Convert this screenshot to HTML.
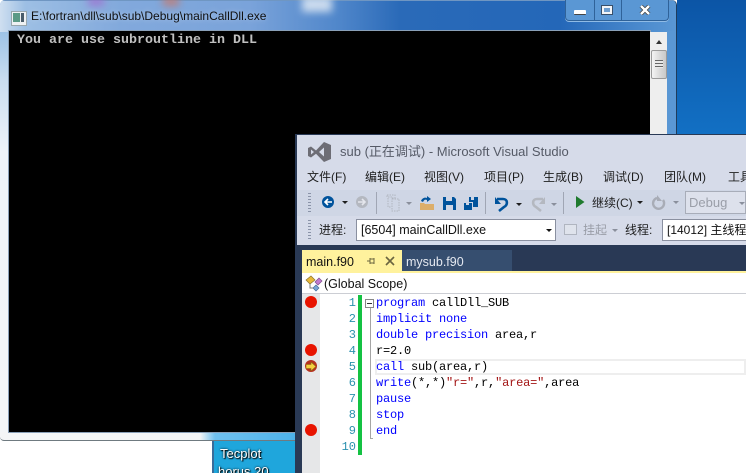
<!DOCTYPE html>
<html><head><meta charset="utf-8">
<style>
html,body{margin:0;padding:0;width:746px;height:473px;overflow:hidden;background:#fff}
body{position:relative;font-family:"Liberation Sans","Noto Sans CJK SC",sans-serif}
div,span,svg{position:absolute;display:block}
.t{white-space:nowrap}
.m{font-size:12px;color:#1e1e1e;top:169px;line-height:16px}
.l{font-size:12px;color:#1e1e1e;line-height:16px;white-space:nowrap}
.c{left:376px;font-family:"Liberation Mono",monospace;font-size:12px;letter-spacing:-.2px;line-height:16px;white-space:pre;color:#000}
.k{position:static;display:inline;color:#0000ff}
.s{position:static;display:inline;color:#a31515}
.n{width:36px;left:320px;text-align:right;font-family:"Liberation Mono",monospace;font-size:12px;line-height:16px;color:#2b91af}
.bp{left:305px;width:12px;height:12px;border-radius:50%;background:#e81400}
</style></head><body>

<!-- desktop -->
<div style="left:212px;top:432px;width:84px;height:41px;background:#1fa6dc"></div>
<div style="left:212px;top:441px;width:2px;height:32px;background:#3a6d9a"></div>
<div style="left:677px;top:0;width:69px;height:135px;background:linear-gradient(180deg,#0c55a6,#1270c4)"></div>
<div class="t" style="left:220px;top:446px;font-size:13px;color:#fff;text-shadow:0 0 2px #000,1px 1px 1px #000">Tecplot</div>
<div class="t" style="left:218px;top:464px;font-size:13px;color:#fff;text-shadow:0 0 2px #000,1px 1px 1px #000">horus 20</div>

<!-- console window -->
<div style="left:0;top:0;width:676px;height:441px;border-radius:5px 5px 0 5px;background:#5a97d4;border-right:1px solid #1f3c5c"></div>
<div style="left:0;top:0;width:676px;height:32px;border-radius:5px 5px 0 0;overflow:hidden;background:linear-gradient(90deg,#cfdff0 0,#9dbfe4 25px,#82a9dc 120px,#7aa3da 250px,#4f86ca 340px,#2a6ab8 400px,#2467b8 560px,#4f8ed0 650px,#5a97d4 676px)">
  <div style="left:0;top:0;width:676px;height:1px;background:#6f96c2"></div>
  <div style="left:88px;top:-3px;width:16px;height:9px;background:#a06fd0;filter:blur(4px);opacity:.8"></div>
  <div style="left:163px;top:-3px;width:16px;height:9px;background:#c8786a;filter:blur(4px);opacity:.8"></div>
  <div style="left:302px;top:-3px;width:30px;height:15px;background:#dfe9f4;filter:blur(4px);opacity:.85"></div>
</div>
<div style="left:0;top:32px;width:9px;height:400px;background:linear-gradient(180deg,#9dc2e6 0,#c9ddf0 12%,#eef3f9 30%,#f4f6f8 100%)"></div>
<div style="left:0;top:432px;width:296px;height:9px;box-sizing:border-box;background:linear-gradient(90deg,#f5f6f7 0,#f3f5f6 200px,#6fc0ee 215px,#4db2ea 296px);border-bottom:1px solid #6f7a80;border-radius:0 0 0 4px"></div>
<div style="left:9px;top:31px;width:641px;height:401px;background:#000;box-shadow:0 0 0 1px #8aa0b8"></div>
<div style="left:667px;top:31px;width:9px;height:104px;background:#5a97d4"></div>

<!-- console icon -->
<div style="left:11px;top:11px;width:14px;height:13px;background:#eef1f3;border:1px solid #99a7ad"></div>
<div style="left:13px;top:13px;width:7px;height:9px;background:#5b9a86"></div>
<div style="left:21px;top:13px;width:3px;height:9px;background:#495c6a"></div>
<div class="t" style="left:31px;top:8px;font-size:12px;line-height:16px;color:#101010;text-shadow:0 0 6px rgba(255,255,255,.45)">E:\fortran\dll\sub\sub\Debug\mainCallDll.exe</div>
<div class="t" style="left:17px;top:33px;font-family:'Liberation Mono',monospace;font-weight:bold;font-size:13.33px;line-height:16px;color:#c0c0c0">You are use subroutline in DLL</div>

<!-- scrollbar -->
<div style="left:650px;top:32px;width:17px;height:103px;background:#eeeeee"></div>
<div style="left:656px;top:40px;width:0;height:0;border-left:3.5px solid transparent;border-right:3.5px solid transparent;border-bottom:4px solid #333"></div>
<div style="left:651px;top:50px;width:14px;height:27px;border:1px solid #9a9a9a;border-radius:2px;background:linear-gradient(90deg,#f4f4f4,#dcdcdc 50%,#c9c9c9)"></div>
<div style="left:655px;top:60px;width:8px;height:8px;background:repeating-linear-gradient(180deg,#666 0,#666 1px,#e8e8e8 1px,#e8e8e8 3px)"></div>

<!-- caption buttons -->
<div style="left:565px;top:0;width:102px;height:20px;border:1px solid #2f6299;border-top:0;border-radius:0 0 4px 4px;box-shadow:0 1px 0 #8fbbe6;background:#5a97d4"></div>
<div style="left:594px;top:0;width:1px;height:20px;background:#2f6299"></div>
<div style="left:621px;top:0;width:1px;height:20px;background:#2f6299"></div>
<div style="left:574px;top:10px;width:12px;height:5px;background:#fff;border-bottom:1px solid #444;box-sizing:border-box;border-radius:1px"></div>
<div style="left:602px;top:6px;width:10px;height:8px;border:2px solid #f2f5f8;box-shadow:0 0 0 1px #39506a;background:#6f9fd0;box-sizing:border-box"></div>
<svg style="left:639px;top:5px" width="12" height="10" viewBox="0 0 12 10"><path d="M2 1l8 8M10 1L2 9" stroke="#444" stroke-width="4" fill="none"/><path d="M2 1l8 8M10 1L2 9" stroke="#fff" stroke-width="2.400" fill="none"/></svg>

<!-- VS window -->
<div style="left:295px;top:134px;width:451px;height:339px;background:#293955"></div>
<div style="left:297px;top:135px;width:449px;height:110px;background:#d6dbe9"></div>
<svg style="left:307px;top:141px" width="26" height="22" viewBox="0 0 26 22"><path d="M1 7 L4 5.5 L9 9.5 L17 1 L24 4 V18 L17 21 L9 12.8 L4 16.5 L1 15 Z M4 8.5 V13.5 L7 11 Z M17 6.500 L12 11 L17 15.500 Z" fill="#6d6d75" fill-rule="evenodd"/></svg>
<div class="t" style="left:340px;top:144px;font-size:13px;line-height:16px;color:#555a66">sub (正在调试) - Microsoft Visual Studio</div>

<!-- menu -->
<div class="t m" style="left:307px">文件(F)</div>
<div class="t m" style="left:365px">编辑(E)</div>
<div class="t m" style="left:424px">视图(V)</div>
<div class="t m" style="left:484px">项目(P)</div>
<div class="t m" style="left:543px">生成(B)</div>
<div class="t m" style="left:603px">调试(D)</div>
<div class="t m" style="left:664px">团队(M)</div>
<div class="t m" style="left:728px">工具</div>

<!-- toolbar 1 -->
<div style="left:297px;top:190px;width:449px;height:26px;background:#cfd6e5"></div>
<div style="left:308px;top:193px;width:3px;height:20px;background:repeating-linear-gradient(180deg,#8a93a8 0,#8a93a8 1px,transparent 1px,transparent 3px)"></div>
<svg style="left:318px;top:192px" width="428" height="24" viewBox="318 192 428 24">
<circle cx="328" cy="202" r="6" fill="#00539c"/><path d="M332 202H326M328 199L325 202L328 205" stroke="#fff" stroke-width="1.600" fill="none"/>
<path d="M342 201h6l-3 3z" fill="#1e1e1e"/>
<circle cx="362" cy="202" r="6" fill="#b4b8c0"/><path d="M358 202H364M362 199L365 202L362 205" stroke="#e4e6ec" stroke-width="1.600" fill="none"/>
<rect x="376" y="192" width="1" height="22" fill="#a0a6b4"/>
<path d="M387 195h8v3h-3v-1h-5zM392 199h7v12h-7zM388 198v9h3" fill="none" stroke="#b0b5c0" stroke-width="1" stroke-dasharray="1.500 1"/>
<path d="M406 202h6l-3 3z" fill="#8a8f9c"/>
<path d="M420 203h4l1 1h9v6h-14z" fill="#dcae6a"/>
<path d="M421 201c1-3 4-4 6-3v-2l4 3-4 3v-2c-2-1-3 0-4 2z" fill="#00539c"/>
<path d="M443 197h11l2 2v11h-13zM446 197v4h6v-4M446 205h7v5h-7z" fill="#00539c" fill-rule="evenodd"/>
<path d="M464 203h8v7h-8zM469 197h9v10h-5v-5h-4z" fill="#00539c"/><path d="M471 197h3v3h-3z" fill="#cfd6e5"/><path d="M466 203h3v2h-3z" fill="#cfd6e5"/>
<rect x="485" y="192" width="1" height="22" fill="#a0a6b4"/>
<path d="M497 199h6c5 0 5 6 1 8l-5 4" fill="none" stroke="#00539c" stroke-width="2.600"/><path d="M495 197v7h6z" fill="#00539c"/>
<path d="M516 203h6l-3 3z" fill="#1e1e1e"/>
<path d="M543 199h-6c-5 0-5 6-1 8l5 4" fill="none" stroke="#b4b8c0" stroke-width="2.600"/><path d="M545 197v7h-6z" fill="#b4b8c0"/>
<path d="M551 203h6l-3 3z" fill="#8a8f9c"/>
<rect x="563" y="192" width="1" height="22" fill="#a0a6b4"/>
<path d="M576 196l8.500 6-8.500 6z" fill="#1f7a2e"/>
<path d="M637 201h6l-3 3z" fill="#1e1e1e"/>
<path d="M657 198a5.500 5.500 0 1 0 6 2" fill="none" stroke="#a8acb6" stroke-width="2.400"/><path d="M657 195v6h5z" fill="#a8acb6"/>
<path d="M673 201h6l-3 3z" fill="#8a8f9c"/>
</svg>
<div class="t l" style="left:592px;top:195px">继续(C)</div>
<div style="left:685px;top:191px;width:61px;height:23px;box-sizing:border-box;border:1px solid #a8adb9;background:#dde1ec"></div>
<div class="t" style="left:689px;top:195px;font-size:13px;line-height:16px;color:#9a9ea8">Debug</div>
<div style="left:739px;top:202px;width:0;height:0;border-left:3px solid transparent;border-right:3px solid transparent;border-top:3px solid #8a8f9c"></div>

<!-- toolbar 2 -->
<div style="left:308px;top:220px;width:3px;height:20px;background:repeating-linear-gradient(180deg,#8a93a8 0,#8a93a8 1px,transparent 1px,transparent 3px)"></div>
<div class="t l" style="left:319px;top:222px">进程:</div>
<div style="left:356px;top:219px;width:200px;height:22px;box-sizing:border-box;border:1px solid #8a90a0;background:#fff"></div>
<div class="t" style="left:361px;top:222px;font-size:12.500px;line-height:16px;color:#111">[6504] mainCallDll.exe</div>
<div style="left:546px;top:229px;width:0;height:0;border-left:3px solid transparent;border-right:3px solid transparent;border-top:3px solid #111"></div>
<div style="left:564px;top:224px;width:13px;height:11px;box-sizing:border-box;border:1px solid #b0b5c0;background:#dfe3ec"></div>
<div class="t l" style="left:583px;top:222px;color:#9a9ea8">挂起</div>
<div style="left:612px;top:229px;width:0;height:0;border-left:3px solid transparent;border-right:3px solid transparent;border-top:3px solid #8a8f9c"></div>
<div class="t l" style="left:625px;top:222px">线程:</div>
<div style="left:662px;top:219px;width:84px;height:22px;box-sizing:border-box;border:1px solid #8a90a0;border-right:0;background:#fff"></div>
<div class="t" style="left:667px;top:222px;font-size:12px;line-height:16px;color:#111">[14012] 主线程</div>

<!-- tabs -->
<div style="left:302px;top:250px;width:100px;height:23px;background:#fff29d"></div>
<div class="t" style="left:306px;top:254px;font-size:12.500px;line-height:16px;color:#111">main.f90</div>
<svg style="left:366px;top:255px" width="30" height="12" viewBox="0 0 30 12"><path d="M1 6h3M4 3v6M4 4h4M4 8h4M8 3v6" stroke="#6b6540" fill="none"/><path d="M20 2l8 8M28 2l-8 8" stroke="#6b6540" stroke-width="1.600" fill="none"/></svg>
<div style="left:402px;top:250px;width:110px;height:21px;background:#364e6f"></div>
<div class="t" style="left:406px;top:254px;font-size:12.500px;line-height:16px;color:#e4e8f0">mysub.f90</div>
<div style="left:302px;top:271px;width:444px;height:2px;background:#fff29d"></div>

<!-- scope bar -->
<div style="left:302px;top:273px;width:444px;height:21px;background:#fff;border-bottom:1px solid #ccced4;box-sizing:border-box"></div>
<svg style="left:305px;top:275px" width="18" height="17" viewBox="0 0 18 17"><path d="M6 1l4 4-5 4-4-4z" fill="#e8b838" stroke="#8a7430" stroke-width=".7"/><path d="M14 3l3 3-4 4-3-3z" fill="#c27bd0" stroke="#7a4a88" stroke-width=".7"/><path d="M11 10l3 3-3 3-3-3z" fill="#7aa6d8" stroke="#3f6a98" stroke-width=".7"/><path d="M5 9v4h3" fill="none" stroke="#777"/></svg>
<div class="t" style="left:324px;top:276px;font-size:12.500px;line-height:16px;color:#111">(Global Scope)</div>

<!-- editor -->
<div style="left:302px;top:294px;width:444px;height:179px;background:#fff"></div>
<div style="left:302px;top:294px;width:18px;height:179px;background:#e6e7e8"></div>
<div style="left:358px;top:295px;width:4px;height:160px;background:#14c243"></div>
<div style="left:370px;top:308px;width:1px;height:130px;background:#a5a5a5"></div>
<div style="left:370px;top:438px;width:3px;height:1px;background:#a5a5a5"></div>
<div style="left:365px;top:299px;width:9px;height:9px;box-sizing:border-box;border:1px solid #888;background:#fff"></div>
<div style="left:367px;top:303px;width:5px;height:1px;background:#333"></div>
<div style="left:375px;top:359px;width:371px;height:16px;box-sizing:border-box;border:2px solid #eeeeee"></div>

<div class="n" style="top:295px">1</div>
<div class="n" style="top:311px">2</div>
<div class="n" style="top:327px">3</div>
<div class="n" style="top:343px">4</div>
<div class="n" style="top:359px">5</div>
<div class="n" style="top:375px">6</div>
<div class="n" style="top:391px">7</div>
<div class="n" style="top:407px">8</div>
<div class="n" style="top:423px">9</div>
<div class="n" style="top:439px">10</div>

<div class="bp" style="top:296px"></div>
<div class="bp" style="top:344px"></div>
<div class="bp" style="top:424px"></div>
<div class="bp" style="top:360px;background:#b5321f"></div>
<svg style="left:306px;top:362px" width="10" height="9" viewBox="0 0 10 9"><path d="M0 2.500h5V0l5 4.500-5 4.500V6.500H0z" fill="#f5d040" stroke="#8a6a10" stroke-width=".6"/></svg>

<div class="c" style="top:295px"><span class="k">program</span> callDll_SUB</div>
<div class="c" style="top:311px"><span class="k">implicit none</span></div>
<div class="c" style="top:327px"><span class="k">double precision</span> area,r</div>
<div class="c" style="top:343px">r=2.0</div>
<div class="c" style="top:359px"><span class="k">call</span> sub(area,r)</div>
<div class="c" style="top:375px"><span class="k">write</span>(*,*)<span class="s">"r="</span>,r,<span class="s">"area="</span>,area</div>
<div class="c" style="top:391px"><span class="k">pause</span></div>
<div class="c" style="top:407px"><span class="k">stop</span></div>
<div class="c" style="top:423px"><span class="k">end</span></div>

</body></html>
